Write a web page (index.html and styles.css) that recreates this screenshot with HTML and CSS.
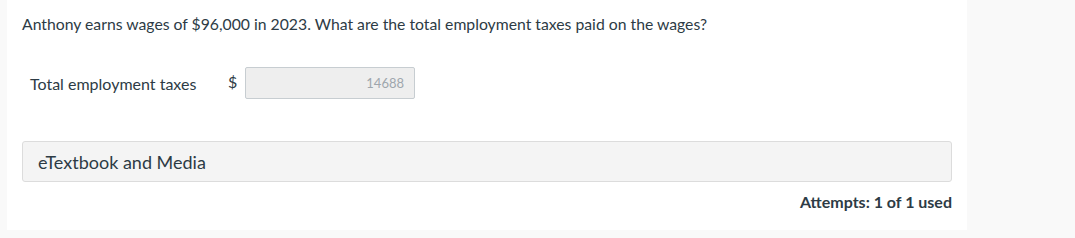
FILE: index.html
```html
<!DOCTYPE html>
<html lang="en">

<head>
  <meta charset="UTF-8" />
  <meta name="viewport" content="width=device-width, initial-scale=1.0" />
  <title>Question</title>
  <link rel="stylesheet" href="styles.css">
</head>

<body>
  <div class="question-card">
    <p class="question-text">Anthony earns wages of $96,000 in 2023. What are the total employment taxes paid on the wages?</p>

    <div class="answer-row">
      <span class="answer-label">Total employment taxes</span>
      <span class="currency">$</span>
      <input class="answer-input" type="text" value="14688" disabled />
    </div>

    <div class="media-box">eTextbook and Media</div>

    <div class="attempts">Attempts: 1 of 1 used</div>
  </div>
</body>

</html>
```

FILE: styles.css
```css
body {
  font-family: Lato, "Open Sans", sans-serif;
  background: #f9f9f9;
  color: #2d3b45;
  margin: 0;
  padding: 0;
}

.question-card {
  background: #fff;
  margin-left: 7px;
  width: 930px;
  height: 216px;
  padding: 14px 15px 0 15px;
}

.question-text {
  margin: 0;
  font-size: 15.75px;
  line-height: 20px;
}

.answer-row {
  display: flex;
  align-items: center;
  margin-top: 33px;
  padding-left: 8px;
  font-size: 16px;
}

.answer-label {
  width: 198px;
}

.currency {
  width: 17px;
  margin-bottom: 4px;
}

.answer-input {
  box-sizing: border-box;
  width: 170px;
  height: 32px;
  padding: 0 10px;
  border: 1px solid #c7cdd1;
  border-radius: 2px;
  background: #eeeeee;
  color: #9ea6ad;
  font-family: inherit;
  font-size: 13px;
  text-align: right;
}

.media-box {
  box-sizing: border-box;
  margin-top: 42px;
  height: 41px;
  padding: 0 15px;
  display: flex;
  align-items: center;
  background: #f4f4f4;
  border: 1px solid #dcdcdc;
  border-radius: 3px;
  font-size: 18px;
}

.attempts {
  margin-top: 10px;
  text-align: right;
  font-weight: bold;
  font-size: 16px;
  line-height: 20px;
}
```
